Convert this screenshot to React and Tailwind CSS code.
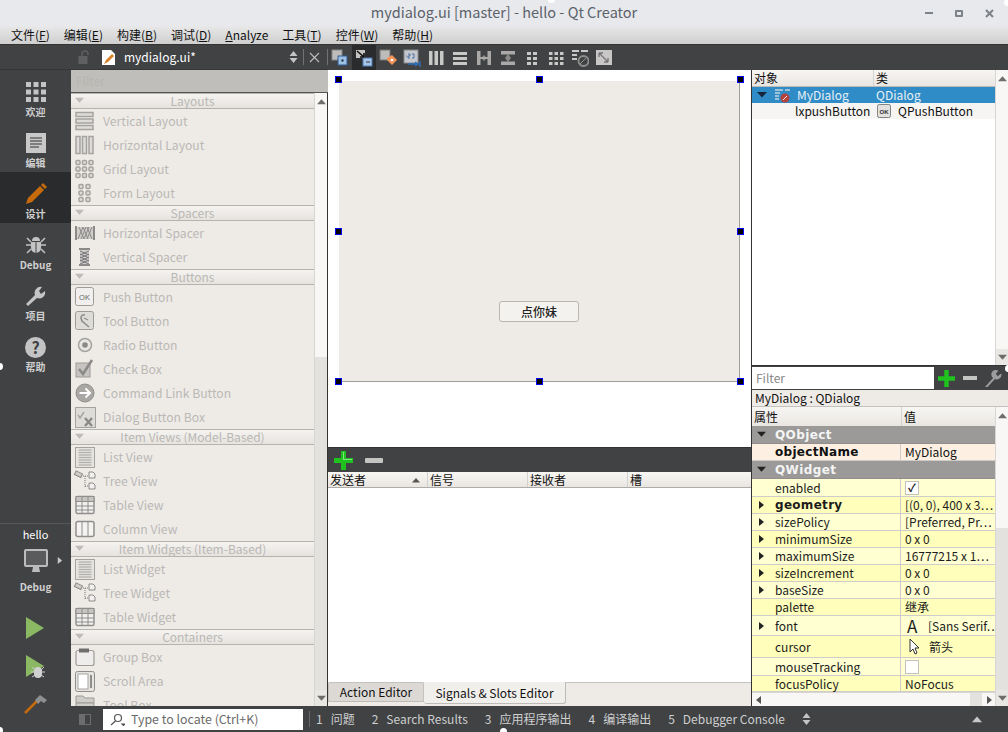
import React from "react";

const font = { fontFamily: '"Noto Sans CJK SC", "Noto Sans", sans-serif' };

const menus = [
  ["文件(", "F", ")"],
  ["编辑(", "E", ")"],
  ["构建(", "B", ")"],
  ["调试(", "D", ")"],
  ["", "A", "nalyze"],
  ["工具(", "T", ")"],
  ["控件(", "W", ")"],
  ["帮助(", "H", ")"],
];

const widgetGroups = [
  ["Layouts", [["vlayout", "Vertical Layout"], ["hlayout", "Horizontal Layout"], ["grid", "Grid Layout"], ["form", "Form Layout"]]],
  ["Spacers", [["hspacer", "Horizontal Spacer"], ["vspacer", "Vertical Spacer"]]],
  ["Buttons", [["ok", "Push Button"], ["tool", "Tool Button"], ["radio", "Radio Button"], ["check", "Check Box"], ["link", "Command Link Button"], ["dialogbox", "Dialog Button Box"]]],
  ["Item Views (Model-Based)", [["list", "List View"], ["tree", "Tree View"], ["table", "Table View"], ["column", "Column View"]]],
  ["Item Widgets (Item-Based)", [["list", "List Widget"], ["tree", "Tree Widget"], ["table", "Table Widget"]]],
  ["Containers", [["group", "Group Box"], ["scroll", "Scroll Area"], ["toolbox", "Tool Box"]]],
];

function WidgetIcon({ name }) {
  const line = "#a5a3a0";
  const fill = "#dedcd9";
  let body = null;
  if (name === "vlayout") {
    body = (
      <g fill={fill} stroke={line} strokeWidth="1.5">
        <rect x="1" y="1.5" width="17" height="4" />
        <rect x="1" y="8" width="17" height="4" />
        <rect x="1" y="14.5" width="17" height="4" />
      </g>
    );
  } else if (name === "hlayout") {
    body = (
      <g fill={fill} stroke={line} strokeWidth="1.5">
        <rect x="1" y="1.5" width="4" height="17" />
        <rect x="7.5" y="1.5" width="4" height="17" />
        <rect x="14" y="1.5" width="4" height="17" />
      </g>
    );
  } else if (name === "grid" || name === "form") {
    const xs = name === "grid" ? [1, 7.5, 14] : [4, 11];
    body = (
      <g fill={fill} stroke={line} strokeWidth="1.5">
        {xs.map((x) => [1.5, 8, 14.5].map((y) => <rect key={x + "-" + y} x={x} y={y} width="4" height="4" rx="1" />))}
      </g>
    );
  } else if (name === "hspacer") {
    body = (
      <g>
        <rect x="1" y="4" width="18" height="12" fill="#cfcdca" />
        <path d="M3 16 8 4M6 16l5-12M9 16l5-12M12 16l5-12M4 4l5 12M8 4l5 12M12 4l5 12" stroke="#8b8a88" strokeWidth="1" />
        <path d="M1 3v14M19 3v14" stroke="#8b8a88" strokeWidth="2" />
      </g>
    );
  } else if (name === "vspacer") {
    body = (
      <g>
        <rect x="5" y="2" width="9" height="16" fill="#cfcdca" />
        <path d="M5 4l9 4M5 7l9 4M5 10l9 4M5 13l9 4M14 4 5 8M14 7l-9 4M14 10l-9 4M14 13l-9 4" stroke="#77767a" strokeWidth="1" />
        <path d="M4 2h11M4 18h11" stroke="#8b8a88" strokeWidth="2" />
      </g>
    );
  } else if (name === "ok") {
    body = (
      <g>
        <rect x="0.5" y="0.5" width="18" height="18" rx="2" fill="#f0efed" stroke="#9d9b98" />
        <text x="9.5" y="12.5" textAnchor="middle" fontSize="7.5" fill="#666" fontFamily="Liberation Sans">OK</text>
      </g>
    );
  } else if (name === "tool") {
    body = (
      <g>
        <rect x="0.5" y="0.5" width="18" height="18" rx="2" fill="#dedcd9" stroke="#9d9b98" />
        <path d="M10 4a3 3 0 0 0-4 3l1 3 7 6" fill="none" stroke="#8f8e8c" strokeWidth="1.6" />
        <path d="M9 7l4 2" stroke="#8f8e8c" strokeWidth="1.2" />
      </g>
    );
  } else if (name === "radio") {
    body = (
      <g>
        <circle cx="10" cy="10" r="6.5" fill="#e8e6e3" stroke="#a5a3a0" strokeWidth="1.5" />
        <circle cx="10" cy="10" r="2.8" fill="#8b8a88" />
      </g>
    );
  } else if (name === "check") {
    body = (
      <g>
        <rect x="1" y="4" width="14" height="14" fill="#c6c4c1" stroke="#9d9b98" />
        <path d="M4 10l4 5 9-14" fill="none" stroke="#8b8a88" strokeWidth="2.6" />
      </g>
    );
  } else if (name === "link") {
    body = (
      <g>
        <circle cx="10" cy="10" r="9" fill="#a9a7a4" stroke="#8f8e8c" />
        <path d="M4.5 10h10M10.5 5.5l4.5 4.5-4.5 4.5" fill="none" stroke="#fff" strokeWidth="2" />
      </g>
    );
  } else if (name === "dialogbox") {
    body = (
      <g>
        <rect x="0.5" y="0.5" width="20" height="20" fill="#dedcd9" stroke="#a5a3a0" />
        <path d="M3 8l2 3 4-6" fill="none" stroke="#a5a3a0" strokeWidth="1.5" />
        <path d="M10 11l7 8M17 11l-7 8" stroke="#8b8a88" strokeWidth="2.4" />
      </g>
    );
  } else if (name === "list") {
    body = (
      <g>
        <rect x="0.5" y="0.5" width="19" height="20" fill="#e6e4e1" stroke="#a5a3a0" />
        {[3, 5.5, 8, 10.5, 13, 15.5, 18].map((y) => (
          <path key={y} d={"M3.5 " + y + "h13"} stroke="#b3b1ae" strokeWidth="1.3" />
        ))}
      </g>
    );
  } else if (name === "tree") {
    body = (
      <g>
        <rect x="0" y="1" width="7" height="4" transform="rotate(25 3 3)" fill="#cfcdca" stroke="#8b8a88" />
        <path d="M10 5v11M8 5h5M10 15h3" stroke="#777" strokeWidth="1" strokeDasharray="1 1" />
        <path d="M14 1h4l2 2v4h-6zM14 12h4l2 2v4h-6z" fill="#f2f1ef" stroke="#8b8a88" />
      </g>
    );
  } else if (name === "table") {
    body = (
      <g>
        <rect x="1" y="1.5" width="18" height="17" rx="1.5" fill="#f0efed" stroke="#8f8e8c" strokeWidth="1.4" />
        <rect x="1" y="1.5" width="18" height="5" fill="#c6c4c1" stroke="#8f8e8c" strokeWidth="1" />
        <path d="M1 11h18M1 15h18M7 2v16M13 2v16" stroke="#8f8e8c" />
      </g>
    );
  } else if (name === "column") {
    body = (
      <g>
        <rect x="1" y="2.5" width="18" height="15" rx="2" fill="#f4f3f1" stroke="#8f8e8c" strokeWidth="1.5" />
        <path d="M7 3v14M13 3v14" stroke="#8f8e8c" />
      </g>
    );
  } else if (name === "group") {
    body = (
      <g>
        <rect x="1" y="3.5" width="18" height="15" rx="2" fill="#eeedeb" stroke="#9d9b98" strokeWidth="1.2" />
        <rect x="4" y="1.5" width="10" height="4" fill="#6f6e6c" />
      </g>
    );
  } else if (name === "scroll") {
    body = (
      <g>
        <rect x="0.5" y="0.5" width="19" height="20" rx="2" fill="#e6e4e1" stroke="#8f8e8c" />
        <rect x="3" y="3" width="10" height="15" fill="#fff" stroke="#a5a3a0" />
        <path d="M16 4v13" stroke="#8f8e8c" strokeWidth="2" />
      </g>
    );
  } else if (name === "toolbox") {
    body = (
      <g fill="#cfcdca" stroke="#9d9b98">
        <path d="M1 1h7l2 2h9v5H1z" />
        <path d="M1 8h18v5H1zM1 13h18v6H1z" />
      </g>
    );
  }
  return (
    <svg width="20" height="21" viewBox="0 0 20 21" className="shrink-0 overflow-visible">
      {body}
    </svg>
  );
}

function Tri({ dir = "down", color = "#b5b3b0", size = 8 }) {
  const d = {
    down: "M0 1.5h8L4 6z",
    up: "M0 6.5h8L4 2z",
    right: "M2 0l5 4-5 4z",
    left: "M6 0 1 4l5 4z",
  }[dir];
  return (
    <svg width={size} height={size} viewBox="0 0 8 8" className="shrink-0">
      <path d={d} fill={color} />
    </svg>
  );
}

function UpDown() {
  return (
    <svg width="9" height="14" viewBox="0 0 9 14" className="shrink-0">
      <path d="M0.5 6h8L4.5 1zM0.5 8h8l-4 5z" fill="#c4c4c4" />
    </svg>
  );
}

function ToolIcon({ i }) {
  const bars = "#c8c8c6";
  const items = [
    <g key="0">
      <rect x="1" y="1" width="10" height="10" fill="#bdbcba" stroke="#888" />
      <rect x="7" y="7" width="9" height="9" fill="#9cc0e6" stroke="#2e5d93" />
      <rect x="10.5" y="10.5" width="2" height="2" fill="#123" />
    </g>,
    <g key="1">
      <rect x="1" y="1" width="9" height="8" fill="#c4c3c1" />
      <rect x="8" y="9" width="9" height="8" fill="#a8c5e6" stroke="#4f7fb5" />
      <path d="M2 2l7 6M9 4v4H5" stroke="#111" strokeWidth="1.6" fill="none" />
      <path d="M11 13h4" stroke="#335" />
    </g>,
    <g key="2">
      <rect x="1" y="1" width="10" height="10" fill="#bdbcba" stroke="#777" />
      <path d="M8 9l5-3 5 5-5 5-5-5z" fill="#f2935a" />
      <circle cx="13" cy="11" r="1.3" fill="#fff" />
    </g>,
    <g key="3">
      <rect x="1" y="1" width="14" height="13" fill="#c5c9cf" stroke="#888" />
      <path d="M3 7h1M5 5h2v2H5v2h2M9 5h2v4H9" stroke="#335f99" strokeWidth="0.8" fill="none" />
      <path d="M5 15h9M12 13l3 2-3 2M17 12v6" stroke="#2f6fba" strokeWidth="1.4" fill="none" />
    </g>,
    <path key="4" d="M2 2h3.5v14H2zM7.5 2H11v14H7.5zM13 2h3.5v14H13z" fill={bars} />,
    <path key="5" d="M2 3h14v3H2zM2 8h14v3H2zM2 13h14v3H2z" fill={bars} />,
    <g key="6" fill="#aaa9a7">
      <path d="M2 2h3.5v14H2zM12.5 2H16v14h-3.5z" />
      <path d="M6 9l3-3 3 3-3 3z" fill="#8a8a88" />
      <path d="M5 8h8v2H5z" />
    </g>,
    <g key="7" fill="#aaa9a7">
      <path d="M2 2h14v3.5H2zM2 12.5h14V16H2z" />
      <path d="M9 5l3 4-3 4-3-4z" fill="#8a8a88" />
    </g>,
    <path key="8" d="M4 3h4v3H4zM10 3h4v3h-4zM4 8h4v3H4zM10 8h4v3h-4zM4 13h4v3H4zM10 13h4v3h-4z" fill={bars} />,
    <path key="9" d="M2 3h3.5v3H2zM7.5 3H11v3H7.500zM13 3h3.5v3H13zM2 8h3.5v3H2zM7.500 8H11v3H7.500zM13 8h3.5v3H13zM2 13h3.5v3H2zM7.500 13H11v3H7.500zM13 13h3.5v3H13z" fill={bars} />,
    <g key="10">
      <path d="M1 1h7v2H1zM10 1h7v2h-7zM1 5h5v2H1zM1 9h5v2H1z" fill={bars} />
      <circle cx="12.5" cy="12" r="5" fill="none" stroke="#8f8f8d" strokeWidth="1.8" />
      <path d="M9 15l7-7" stroke="#8f8f8d" />
    </g>,
    <g key="11">
      <rect x="1" y="1" width="16" height="15" fill="#c8c7c5" />
      <path d="M4 4l9 9M4 4h4M4 4v4M13 13H9M13 13V9" stroke="#77767a" strokeWidth="1.3" fill="none" />
    </g>,
  ];
  return (
    <svg width="18" height="18" viewBox="0 0 18 18" className="shrink-0">
      {items[i]}
    </svg>
  );
}

function ModeItem({ label, active, children }) {
  return (
    <div className={"h-[51px] flex flex-col items-center pt-[9px] " + (active ? "bg-[#2a2b2d]" : "")}>
      <div className="h-[26px] flex items-center justify-center">{children}</div>
      <div className="text-[10px] leading-[14px] font-bold text-[#cfcfcf]">{label}</div>
    </div>
  );
}

function Handle({ className }) {
  return <div className={"absolute w-[7px] h-[7px] bg-black border border-[#0000ff] " + className} />;
}

function Scrollbar({ thumbEnd, className = "" }) {
  return (
    <div className={"w-[13px] shrink-0 flex flex-col bg-[#e4e2de] border-l border-[#d8d6d2] " + className}>
      <div className="bg-[#f8f7f5]" style={{ height: thumbEnd }}>
        <div className="h-[16px] flex items-center justify-center">
          <Tri dir="up" color="#6e6d6b" size={9} />
        </div>
      </div>
      <div className="flex-1" />
      <div className="h-[16px] bg-[#e9e7e3] flex items-center justify-center">
        <Tri dir="down" color="#6e6d6b" size={9} />
      </div>
    </div>
  );
}

const props = [
  { n: "enabled", check: true, h: 18, light: true },
  { n: "geometry", v: "[(0, 0), 400 x 3⋯", bold: true, arrow: true },
  { n: "sizePolicy", v: "[Preferred, Pr⋯", arrow: true, light: true },
  { n: "minimumSize", v: "0 x 0", arrow: true },
  { n: "maximumSize", v: "16777215 x 1⋯", arrow: true, light: true },
  { n: "sizeIncrement", v: "0 x 0", arrow: true },
  { n: "baseSize", v: "0 x 0", arrow: true, light: true },
  { n: "palette", v: "继承" },
  { n: "font", v: "[Sans Serif⋯", arrow: true, h: 20, light: true, icon: "font" },
  { n: "cursor", v: "箭头", h: 22, icon: "cursor" },
  { n: "mouseTracking", box: true, h: 18, light: true },
  { n: "focusPolicy", v: "NoFocus", h: 16 },
];

function PropRow({ p }) {
  const bg = p.light ? "bg-[#ffffd2]" : "bg-[#ffffbb]";
  return (
    <div className={"flex border-b border-[#cfcdc9] text-[12px] text-[#1c1c1c] " + bg} style={{ height: p.h || 17 }}>
      <div className="w-[149px] shrink-0 flex items-center border-r border-[#cfcdc9]">
        <div className="w-[23px] pl-[5px] flex items-center">{p.arrow && <Tri dir="right" color="#222" />}</div>
        {p.bold ? (
          <span className="font-bold text-[12px] tracking-[0.3px]" style={{ fontFamily: '"DejaVu Sans", sans-serif' }}>
            {p.n}
          </span>
        ) : (
          <span>{p.n}</span>
        )}
      </div>
      <div className="flex-1 min-w-0 flex items-center pl-[4px] whitespace-nowrap">
        {p.check && (
          <div className="w-[14px] h-[14px] bg-white border border-[#c4c2be] flex items-center justify-center text-[11px] leading-none font-bold">
            ✓
          </div>
        )}
        {p.box && <div className="w-[14px] h-[14px] bg-white border border-[#c4c2be]" />}
        {p.icon === "font" && <span className="w-[23px] shrink-0 pl-[2px] text-[17px] leading-none">A</span>}
        {p.icon === "cursor" && (
          <svg width="24" height="18" viewBox="0 0 24 18" className="shrink-0">
            <path d="M5 1v13l3-3 2 5 2-1-2-5h4z" fill="#fff" stroke="#333" />
          </svg>
        )}
        {p.v && <span>{p.v}</span>}
      </div>
    </div>
  );
}

function Category({ name }) {
  return (
    <div className="h-[18px] bg-[#9b9a98] flex items-center border-b border-[#8f8e8c]">
      <div className="w-[23px] pl-[5px] flex items-center">
        <Tri color="#222" size={9} />
      </div>
      <span className="font-bold text-[12px] leading-[16px] pt-[1px] text-[#f4f4f4] tracking-[0.4px]" style={{ fontFamily: '"DejaVu Sans", sans-serif' }}>
        {name}
      </span>
    </div>
  );
}

function HeaderCell({ className = "", children }) {
  return (
    <div className={"h-full flex items-center pl-[2px] border-r border-[#d4d2ce] text-[12px] text-[#111] " + className}>{children}</div>
  );
}

function Dot({ className }) {
  return <div className={"absolute w-[7px] h-[7px] rounded-full bg-white " + className} />;
}

export default function App() {
  return (
    <div className="relative w-[1008px] h-[732px] overflow-hidden flex flex-col bg-[#404244]" style={font}>
      {/* title */}
      <div className="h-[26px] shrink-0 bg-[#e8e9ed] flex items-center text-[#5b6269]">
        <div className="flex-1" />
        <div className="text-[14.5px] leading-[20px] pb-[2px]">mydialog.ui [master] - hello - Qt Creator</div>
        <div className="flex-1 flex items-center justify-end gap-[22px]">
          <div className="w-[8px] h-[2px] bg-[#7c8288]" />
          <div className="w-[8px] h-[7px] border-2 border-[#7c8288] rounded-[1px]" />
          <svg width="9" height="9" viewBox="0 0 9 9" className="mr-[14px]">
            <path d="M1 1l7 7M8 1 1 8" stroke="#7c8288" strokeWidth="2" />
          </svg>
        </div>
      </div>

      {/* menu */}
      <div className="h-[19px] shrink-0 bg-gradient-to-b from-[#e8e8e9] to-[#cfcfcf] border-b border-[#333] flex items-center pl-[11px] gap-[14px] text-[12px] text-[#111]">
        {menus.map((m) => (
          <span key={m[1]} className="leading-[18px]">
            {m[0]}
            <span className="underline">{m[1]}</span>
            {m[2]}
          </span>
        ))}
      </div>

      <div className="flex-1 min-h-0 flex">
        {/* mode bar */}
        <div className="w-[71px] shrink-0 flex flex-col bg-[#404244]">
          <div className="h-[25px] shrink-0 border-b border-[#343638]" />
          <ModeItem label="欢迎">
            <svg width="20" height="20" viewBox="0 0 20 20">
              <path d="M0 0h5v5H0zM7.500 0h5v5h-5zM15 0h5v5h-5zM0 7.500h5v5H0zM7.500 7.500h5v5h-5zM15 7.500h5v5h-5zM0 15h5v5H0zM7.500 15h5v5h-5zM15 15h5v5h-5z" fill="#c4c4c4" />
            </svg>
          </ModeItem>
          <ModeItem label="编辑">
            <svg width="20" height="20" viewBox="0 0 20 20">
              <rect width="20" height="20" fill="#c8c8c8" />
              <path d="M4 5h12M4 8h12M4 11h12M4 14h9" stroke="#333" />
            </svg>
          </ModeItem>
          <ModeItem label="设计" active>
            <svg width="22" height="22" viewBox="0 0 22 22">
              <path d="M1 21l2-6L15 3l4 4L7 19z" fill="#c76a0b" />
              <path d="M16 2l2-2 4 4-2 2z" fill="#c76a0b" />
            </svg>
          </ModeItem>
          <ModeItem label="Debug">
            <svg width="20" height="20" viewBox="0 0 20 20">
              <path d="M6 6a4 4 0 0 1 8 0zM5 7h10v6a5 5 0 0 1-10 0z" fill="#c4c4c4" />
              <path d="M1 3l4 4M19 3l-4 4M0 10h5M15 10h5M1 18l4-4M19 18l-4-4" stroke="#c4c4c4" strokeWidth="1.5" />
              <path d="M10 7v11" stroke="#404244" />
            </svg>
          </ModeItem>
          <ModeItem label="项目">
            <svg width="20" height="20" viewBox="0 0 20 20">
              <path d="M0 18l9-9a6 6 0 0 1 7-8l-3 4 2 3 4-3a6 6 0 0 1-8 7l-9 8z" fill="#c4c4c4" />
            </svg>
          </ModeItem>
          <ModeItem label="帮助">
            <div className="w-[21px] h-[21px] rounded-full bg-[#c4c4c4] flex items-center justify-center text-[16px] font-bold text-[#404244] leading-none">?</div>
          </ModeItem>

          <div className="flex-1" />

          <div className="h-[209px] shrink-0 border-t border-[#55575a] flex flex-col items-center">
            <div className="text-[11px] leading-[14px] text-white mt-[3px]">hello</div>
            <div className="relative mt-[8px] h-[25px] flex items-center">
              <svg width="24" height="25" viewBox="0 0 24 25">
                <rect x="1" y="1" width="22" height="16" rx="1" fill="#5a5b5d" stroke="#bcbcbc" strokeWidth="2" />
                <path d="M9 18h6l1 5H8z" fill="#bcbcbc" />
              </svg>
              <div className="absolute left-[32px] top-[8px]">
                <Tri dir="right" color="#c8c8c8" size={7} />
              </div>
            </div>
            <div className="text-[10px] font-bold leading-[14px] text-[#cfcfcf] mt-[6px]">Debug</div>
            <svg width="18" height="22" viewBox="0 0 18 22" className="mt-[23px] mr-[1px]">
              <path d="M0 0l18 11L0 22z" fill="#8ab863" />
            </svg>
            <svg width="22" height="23" viewBox="0 0 22 23" className="mt-[16px] ml-[2px]">
              <path d="M0 0l18 11L0 22z" fill="#8ab863" />
              <path d="M8 15a4 4 0 0 1 4-3 4 4 0 0 1 4 3v4a4 4 0 0 1-8 0z" fill="#d0d0d0" />
              <path d="M6 12l3 3M18 12l-3 3M5 17h3M16 17h3M6 22l3-2M18 22l-3-2" stroke="#d0d0d0" />
            </svg>
            <svg width="24" height="24" viewBox="0 0 24 24" className="mt-[14px]">
              <path d="M1 21l13-13" stroke="#c76a0b" strokeWidth="2.5" />
              <path d="M11 8l5-5 7 5-3 3-3-2-3 3z" fill="#8f8f8f" />
            </svg>
          </div>
        </div>

        <div className="flex-1 min-w-0 flex flex-col">
          <div className="flex-1 min-h-0 flex">
            {/* widget box */}
            <div className="w-[257px] shrink-0 flex flex-col">
              <div className="h-[25px] shrink-0 flex items-center bg-[#404244] border-b border-[#343638]">
                <svg width="14" height="14" viewBox="0 0 14 14" className="ml-[7px]">
                  <rect x="0.500" y="6" width="9" height="8" fill="#5e6062" />
                  <path d="M4 6V4a3 3 0 0 1 6 0v1" fill="none" stroke="#5e6062" strokeWidth="1.5" />
                </svg>
                <svg width="15" height="17" viewBox="0 0 15 17" className="ml-[9px]">
                  <path d="M1 1h9l4 4v11H1z" fill="#fff" />
                  <path d="M3 15l2-4 6-6 2 2-6 6z" fill="#d8832b" />
                </svg>
                <span className="ml-[8px] text-[12px] text-white">mydialog.ui*</span>
                <div className="flex-1" />
                <UpDown />
                <div className="w-px h-[16px] bg-[#707274] ml-[5px]" />
                <svg width="11" height="11" viewBox="0 0 11 11" className="ml-[5px]">
                  <path d="M1 1l9 9M10 1 1 10" stroke="#bdbdbd" strokeWidth="1.1" />
                </svg>
                <div className="w-px h-[16px] bg-[#707274] ml-[7px]" />
              </div>
              <div className="h-[23px] shrink-0 bg-[#bfbeba] border-b border-[#555] flex items-center pl-[5px] text-[12px] text-[#b6b5b1]">
                Filter
              </div>
              <div className="flex-1 min-h-0 flex border-r border-[#333]">
                <div className="flex-1 min-w-0 overflow-hidden bg-[#eeebe7]">
                  {widgetGroups.map(([title, rows]) => (
                    <div key={title}>
                      <div className="h-[16px] flex items-center bg-gradient-to-b from-[#f5f3f0] to-[#e6e3df] border-t border-b border-[#b5b3af] text-[12px] text-[#b9b7b4] relative">
                        <div className="absolute left-[4px] top-[2px]">
                          <Tri color="#bdbbb8" size={9} />
                        </div>
                        <div className="w-full text-center leading-[14px]">{title}</div>
                      </div>
                      {rows.map(([icon, label]) => (
                        <div key={label} className="h-[24px] flex items-center pl-[4px] gap-[8px] text-[12.2px] text-[#bab8b5]">
                          <WidgetIcon name={icon} />
                          <span>{label}</span>
                        </div>
                      ))}
                    </div>
                  ))}
                </div>
                <Scrollbar thumbEnd={264} />
              </div>
            </div>

            {/* central */}
            <div className="w-[423px] shrink-0 flex flex-col">
              <div className="h-[25px] shrink-0 flex items-center bg-[#404244]">
                {Array.from({ length: 12 }).map((_, i) => (
                  <div key={i} className={"w-[24px] h-[25px] flex items-center justify-center " + (i === 1 ? "bg-[#2a2b2d]" : "")}>
                    <ToolIcon i={i} />
                  </div>
                ))}
              </div>
              <div className="h-[378px] shrink-0 bg-white pl-[11px] pt-[11px] border-b border-[#333]">
                <div className="relative w-[401px] h-[301px] bg-[#eeebe7] border-r border-b border-[#a09f9c] pt-[220px] pl-[160px]">
                  <button className="block w-[80px] h-[21px] bg-[#f4f2ef] border border-[#b8b6b2] rounded-[3px] text-[12px] leading-none font-medium text-[#222]">
                    点你妹
                  </button>
                  <Handle className="-left-[4px] -top-[5px]" />
                  <Handle className="left-[197px] -top-[5px]" />
                  <Handle className="left-[398px] -top-[5px]" />
                  <Handle className="-left-[4px] top-[147px]" />
                  <Handle className="left-[398px] top-[147px]" />
                  <Handle className="-left-[4px] top-[297px]" />
                  <Handle className="left-[197px] top-[297px]" />
                  <Handle className="left-[398px] top-[297px]" />
                </div>
              </div>
              <div className="h-[24px] shrink-0 bg-[#404244] flex items-center pl-[6px] gap-[12px]">
                <svg width="19" height="19" viewBox="0 0 19 19">
                  <path d="M7 0h5v7h7v5h-7v7H7v-7H0V7h7z" fill="#1fc21f" />
                  <path d="M8 1h2v7h8v1H9v-8z" fill="#7fe67f" />
                </svg>
                <div className="w-[18px] h-[5px] bg-[#c4c4c2] rounded-[1px]" />
              </div>
              <div className="h-[16px] shrink-0 flex bg-gradient-to-b from-[#f8f6f3] to-[#e9e6e2] border-b border-[#aeaca8]">
                <HeaderCell className="w-[100px] justify-between pr-[7px]">
                  <span>发送者</span>
                  <Tri dir="up" color="#555" />
                </HeaderCell>
                <HeaderCell className="w-[100px]">信号</HeaderCell>
                <HeaderCell className="w-[100px]">接收者</HeaderCell>
                <HeaderCell className="flex-1 border-r-0">槽</HeaderCell>
              </div>
              <div className="flex-1 min-h-0 bg-white" />
              <div className="h-[24px] shrink-0 flex items-start bg-[#eeebe7] text-[12px] text-[#111]">
                <div className="w-[96px] h-[20px] bg-[#dcd9d5] border border-[#c4c2be] border-b-[#bdbbb7] rounded-t-[2px] flex items-center justify-center">
                  Action Editor
                </div>
                <div className="w-[142px] h-[22px] bg-[#f1efec] border-r border-b border-[#bdbbb7] rounded-b-[3px] flex items-center justify-center">
                  Signals &amp; Slots Editor
                </div>
                <div className="flex-1 h-px bg-[#c4c2be]" />
              </div>
            </div>

            {/* right column */}
            <div className="flex-1 min-w-0 flex flex-col border-l border-[#333]">
              <div className="h-[25px] shrink-0 bg-[#404244] -ml-px" />
              <div className="h-[295px] shrink-0 flex bg-white text-[12px]">
                <div className="flex-1 min-w-0 flex flex-col">
                  <div className="h-[17px] shrink-0 flex bg-gradient-to-b from-[#f8f6f3] to-[#e9e6e2] border-b border-[#bdbbb7]">
                    <HeaderCell className="w-[122px]">对象</HeaderCell>
                    <HeaderCell className="flex-1 border-r-0">类</HeaderCell>
                  </div>
                  <div className="h-[16px] shrink-0 flex items-center bg-[#308cc6] text-[#e8f1f8]">
                    <div className="w-[23px] pl-[5px] flex items-center">
                      <Tri color="#16253a" size={10} />
                    </div>
                    <svg width="16" height="15" viewBox="0 0 16 15">
                      <path d="M0 2h8M0 5h5M0 8h4M0 11h4M10 2h5" stroke="#c4d4e0" strokeWidth="1.6" />
                      <circle cx="10" cy="10" r="4.500" fill="#b4423d" />
                      <path d="M8 12l4-4" stroke="#eee" />
                    </svg>
                    <span className="ml-[6px] w-[79px]">MyDialog</span>
                    <span>QDialog</span>
                  </div>
                  <div className="h-[16px] shrink-0 flex items-center bg-[#f7f5f3] text-[#111] whitespace-nowrap">
                    <span className="ml-[43px] w-[82px]">lxpushButton</span>
                    <svg width="14" height="14" viewBox="0 0 15 15">
                      <rect x="0.500" y="0.500" width="14" height="14" rx="2" fill="#e2e1df" stroke="#777" />
                      <text x="7.500" y="10.500" textAnchor="middle" fontSize="6.500" fontWeight="bold" fill="#333" fontFamily="Liberation Sans">OK</text>
                    </svg>
                    <span className="ml-[7px]">QPushButton</span>
                  </div>
                </div>
                <Scrollbar thumbEnd={279} className="bg-[#f8f7f5]" />
              </div>
              <div className="h-[25px] shrink-0 bg-[#404244] flex items-center border-t border-[#333]">
                <div className="w-[182px] h-[22px] bg-white flex items-center pl-[4px] text-[12px] text-[#8a8a8a]">Filter</div>
                <svg width="17" height="17" viewBox="0 0 19 19" className="ml-[4px]">
                  <path d="M7 0h5v7h7v5h-7v7H7v-7H0V7h7z" fill="#1fc21f" />
                </svg>
                <div className="w-[14px] h-[4px] bg-[#c4c4c2] ml-[8px]" />
                <svg width="18" height="18" viewBox="0 0 20 20" className="ml-[8px]">
                  <path d="M0 20l9-10a5 5 0 0 1 6-8l-3 3 2 3 4-3a5 5 0 0 1-7 6l-9 10z" fill="#9d9d9d" />
                </svg>
              </div>
              <div className="h-[17px] shrink-0 bg-[#eeebe7] flex items-center pl-[3px] text-[12px] text-[#111] border-b border-[#c4c2be]">
                MyDialog : QDialog
              </div>
              <div className="flex-1 min-h-0 flex">
                <div className="flex-1 min-w-0 flex flex-col">
                  <div className="h-[19px] shrink-0 flex bg-gradient-to-b from-[#f8f6f3] to-[#e9e6e2]">
                    <HeaderCell className="w-[150px]">属性</HeaderCell>
                    <HeaderCell className="flex-1 border-r-0">值</HeaderCell>
                  </div>
                  <Category name="QObject" />
                  <div className="h-[17px] flex bg-[#fdf0e2] border-b border-[#cfcdc9] text-[12px] text-[#111]">
                    <div className="w-[149px] shrink-0 flex items-center pl-[23px] border-r border-[#cfcdc9]">
                      <span className="font-bold text-[12px] tracking-[0.3px]" style={{ fontFamily: '"DejaVu Sans", sans-serif' }}>
                        objectName
                      </span>
                    </div>
                    <div className="flex items-center pl-[4px]">MyDialog</div>
                  </div>
                  <Category name="QWidget" />
                  {props.map((p) => (
                    <PropRow key={p.n} p={p} />
                  ))}
                  <div className="flex-1 flex bg-[#f8f7f5] border-t border-[#d8d6d2]">
                    <div className="w-[13px] flex items-center justify-center">
                      <Tri dir="left" color="#555" />
                    </div>
                    <div className="flex-1" />
                    <div className="w-[12px] bg-[#e4e2de]" />
                    <div className="w-[13px] flex items-center justify-center">
                      <Tri dir="right" color="#555" />
                    </div>
                  </div>
                </div>
                <Scrollbar thumbEnd={121} />
              </div>
            </div>
          </div>

          {/* status bar */}
          <div className="h-[26px] shrink-0 bg-[#404244] flex items-center text-[12px] text-[#cfcfcf] whitespace-nowrap">
            <div className="ml-[8px] w-[12px] h-[11px] flex border border-[#6b6d6f]">
              <div className="w-[5px] bg-[#6b6d6f]" />
            </div>
            <div className="ml-[12px] w-[200px] h-[21px] bg-white flex items-center pl-[7px] text-[#6b6b6b]">
              <svg width="15" height="13" viewBox="0 0 15 13" className="shrink-0">
                <circle cx="8" cy="5" r="3.500" fill="none" stroke="#555" strokeWidth="1.2" />
                <path d="M5.500 8 1 12M12 11h3l-1.500 1.500z" stroke="#555" strokeWidth="1.200" fill="#555" />
              </svg>
              <span className="ml-[6px] text-[12.4px]">Type to locate (Ctrl+K)</span>
            </div>
            <div className="ml-[6px] w-px h-[16px] bg-[#66686a]" />
            <div className="ml-[6px] flex gap-[17px]">
              {[["1", "问题"], ["2", "Search Results"], ["3", "应用程序输出"], ["4", "编译输出"], ["5", "Debugger Console"]].map(([k, v]) => (
                <div key={k} className="flex gap-[8px]">
                  <span>{k}</span>
                  <span>{v}</span>
                </div>
              ))}
            </div>
            <div className="ml-[17px]">
              <UpDown />
            </div>
            <div className="flex-1" />
            <div className="mr-[26px]">
              <Tri dir="up" color="#c8c8c8" size={10} />
            </div>
          </div>
        </div>
      </div>

      <Dot className="-left-[4px] top-[363px]" />
      <Dot className="-left-[4px] top-[727px]" />
      <Dot className="left-[500px] top-[728px]" />
      <Dot className="left-[548px] -top-[4px]" />
      <Dot className="left-[1004px] -top-[1px]" />
      <Dot className="left-[1005px] top-[365px]" />
    </div>
  );
}
